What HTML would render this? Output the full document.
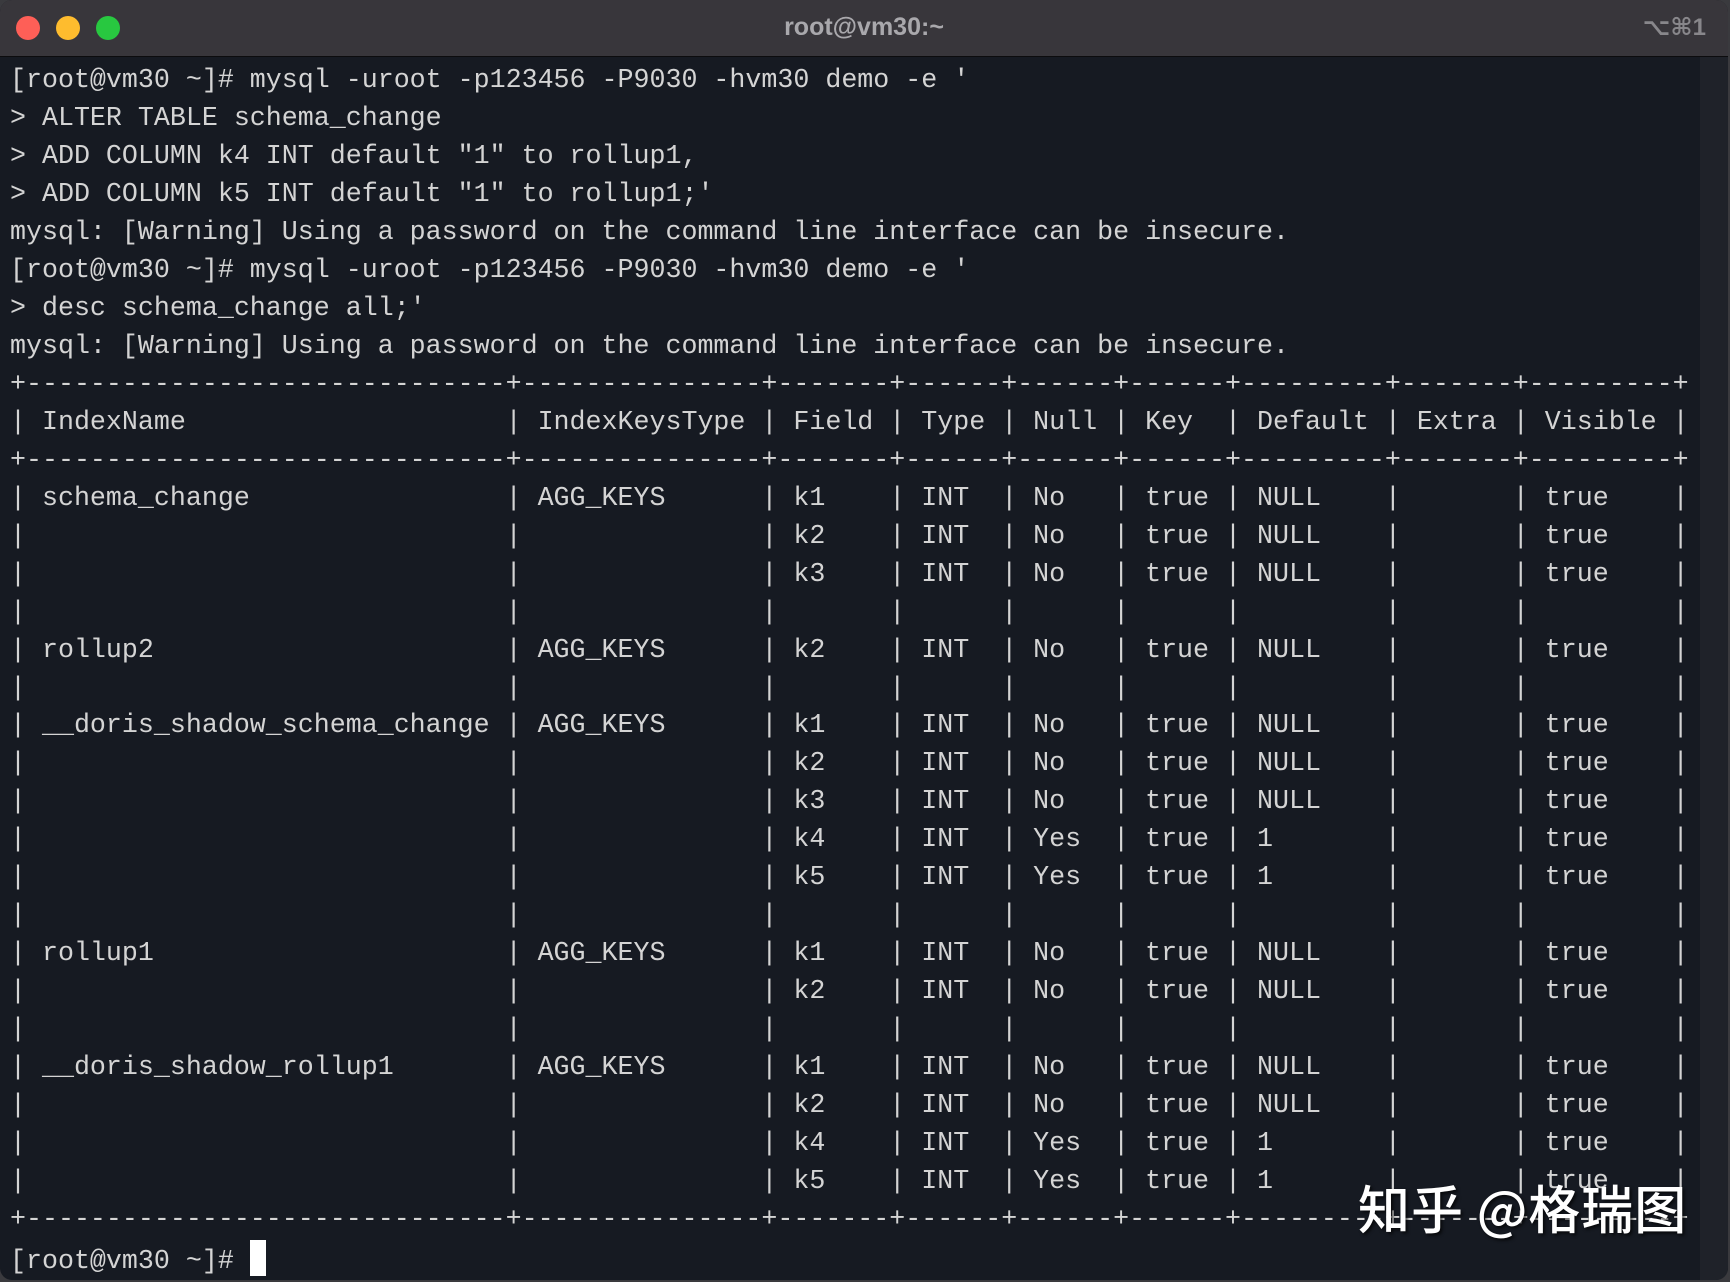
<!DOCTYPE html>
<html><head><meta charset="utf-8"><style>
html,body{margin:0;padding:0;background:#3a3a3e;}
body{width:1730px;height:1282px;overflow:hidden;position:relative;}
.win{position:absolute;left:0;top:0;width:1728px;height:1280px;background:#161a22;border-radius:12px;overflow:hidden;}
.bar{position:absolute;left:0;top:0;width:100%;height:56px;background:#38363b;border-bottom:1px solid #0c0c0e;}
.dot{position:absolute;top:16px;width:24px;height:24px;border-radius:50%;}
.title{position:absolute;left:0;right:0;top:13px;text-align:center;color:#a9a8ac;font:bold 25px "Liberation Sans",sans-serif;}
.kbd{position:absolute;right:22px;top:13px;color:#88878b;font:bold 24px "Liberation Sans","DejaVu Sans",sans-serif;}
.scroll{position:absolute;left:1700px;top:57px;width:28px;height:1223px;background:#1f2229;}
pre{position:absolute;left:10px;top:63px;margin:0;font-family:"Liberation Mono",monospace;font-size:26.65px;line-height:37.97px;color:#d4d4d4;}
.cur{display:inline-block;width:16px;height:36px;background:#fff;vertical-align:-8px;}
.wm{position:absolute;left:1358px;top:1169px;color:#fff;font:500 52px "Noto Sans CJK SC",sans-serif;text-shadow:2px 2px 3px rgba(0,0,0,.7);letter-spacing:1px;}
</style></head><body>
<div class="win">
<div class="bar">
<div class="dot" style="left:16px;background:#fe5f57"></div>
<div class="dot" style="left:56px;background:#febc2e"></div>
<div class="dot" style="left:96px;background:#28c840"></div>
<div class="title">root@vm30:~</div>
<div class="kbd">⌥⌘1</div>
</div>
<div class="scroll"></div>
<pre>[root@vm30 ~]# mysql -uroot -p123456 -P9030 -hvm30 demo -e '
&gt; ALTER TABLE schema_change
&gt; ADD COLUMN k4 INT default "1" to rollup1,
&gt; ADD COLUMN k5 INT default "1" to rollup1;'
mysql: [Warning] Using a password on the command line interface can be insecure.
[root@vm30 ~]# mysql -uroot -p123456 -P9030 -hvm30 demo -e '
&gt; desc schema_change all;'
mysql: [Warning] Using a password on the command line interface can be insecure.
+------------------------------+---------------+-------+------+------+------+---------+-------+---------+
| IndexName                    | IndexKeysType | Field | Type | Null | Key  | Default | Extra | Visible |
+------------------------------+---------------+-------+------+------+------+---------+-------+---------+
| schema_change                | AGG_KEYS      | k1    | INT  | No   | true | NULL    |       | true    |
|                              |               | k2    | INT  | No   | true | NULL    |       | true    |
|                              |               | k3    | INT  | No   | true | NULL    |       | true    |
|                              |               |       |      |      |      |         |       |         |
| rollup2                      | AGG_KEYS      | k2    | INT  | No   | true | NULL    |       | true    |
|                              |               |       |      |      |      |         |       |         |
| __doris_shadow_schema_change | AGG_KEYS      | k1    | INT  | No   | true | NULL    |       | true    |
|                              |               | k2    | INT  | No   | true | NULL    |       | true    |
|                              |               | k3    | INT  | No   | true | NULL    |       | true    |
|                              |               | k4    | INT  | Yes  | true | 1       |       | true    |
|                              |               | k5    | INT  | Yes  | true | 1       |       | true    |
|                              |               |       |      |      |      |         |       |         |
| rollup1                      | AGG_KEYS      | k1    | INT  | No   | true | NULL    |       | true    |
|                              |               | k2    | INT  | No   | true | NULL    |       | true    |
|                              |               |       |      |      |      |         |       |         |
| __doris_shadow_rollup1       | AGG_KEYS      | k1    | INT  | No   | true | NULL    |       | true    |
|                              |               | k2    | INT  | No   | true | NULL    |       | true    |
|                              |               | k4    | INT  | Yes  | true | 1       |       | true    |
|                              |               | k5    | INT  | Yes  | true | 1       |       | true    |
+------------------------------+---------------+-------+------+------+------+---------+-------+---------+
[root@vm30 ~]# <span class="cur"></span></pre>
<div class="wm">知乎 @格瑞图</div>
</div>
</body></html>
